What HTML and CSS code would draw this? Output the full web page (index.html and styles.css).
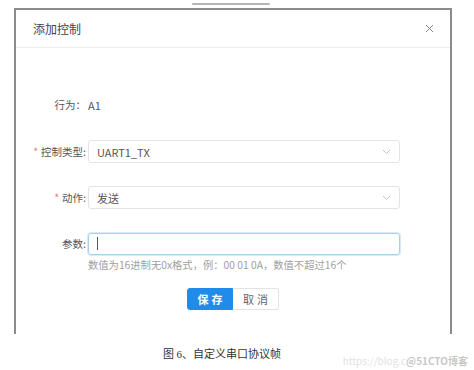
FILE: index.html
```html
<!DOCTYPE html>
<html lang="zh-CN">
<head>
    <meta charset="UTF-8">
    <title>添加控制</title>
    <link rel="stylesheet" href="styles.css">
</head>
<body>
    <div class="top-strip"><div class="strip-mark"></div></div>

    <div class="dialog">
        <div class="dialog-header">
            <span class="dialog-title">添加控制</span>
            <svg class="close-icon" width="9" height="9" viewBox="0 0 9 9">
                <path d="M1 1 L8 8 M8 1 L1 8" stroke="#8a8a8a" stroke-width="1" fill="none"/>
            </svg>
        </div>

        <div class="dialog-body">
            <div class="form-row row-plain">
                <label class="form-label">行为：</label>
                <span class="plain-value">A1</span>
            </div>

            <div class="form-row">
                <label class="form-label"><i class="star">*</i>控制类型:</label>
                <div class="select-box">
                    <span>UART1_TX</span>
                    <svg class="arrow" width="9" height="6" viewBox="0 0 9 6">
                        <path d="M1 1 L4.5 4.5 L8 1" stroke="#c0c4cc" stroke-width="1" fill="none"/>
                    </svg>
                </div>
            </div>

            <div class="form-row">
                <label class="form-label"><i class="star">*</i>动作:</label>
                <div class="select-box">
                    <span>发送</span>
                    <svg class="arrow" width="9" height="6" viewBox="0 0 9 6">
                        <path d="M1 1 L4.5 4.5 L8 1" stroke="#c0c4cc" stroke-width="1" fill="none"/>
                    </svg>
                </div>
            </div>

            <div class="form-row">
                <label class="form-label">参数:</label>
                <div class="text-input focused"><span class="caret"></span></div>
            </div>
            <p class="hint">数值为16进制无0x格式，例：00 01 0A，数值不超过16个</p>

            <div class="actions">
                <button class="btn btn-primary">保存</button>
                <button class="btn btn-default">取消</button>
            </div>
        </div>
    </div>

    <div class="caption">图 6、自定义串口协议帧</div>
    <div class="watermark"><span class="wm-url">https://blog.c</span><span class="wm-site">@51CTO博客</span></div>
</body>
</html>
```

FILE: styles.css
```css
body {
    margin: 0;
    width: 474px;
    height: 370px;
    overflow: hidden;
    background: #fff;
    font-family: "Noto Sans CJK SC", "Noto Sans", sans-serif;
    color: #606266;
}

.top-strip {
    height: 5px;
    padding-left: 192px;
}

.strip-mark {
    width: 78px;
    height: 2px;
    margin-top: 3px;
    background: #b4b4b4;
    border-radius: 1px;
}

.dialog {
    margin-left: 14px;
    width: 434px;
    height: 324px;
    border: 2px solid #8c8c8c;
    border-bottom: none;
    background: #fff;
}

.dialog-header {
    height: 37px;
    display: flex;
    align-items: center;
    justify-content: space-between;
    padding: 0 16px 0 17px;
    border-bottom: 1px solid #ececec;
}

.dialog-title {
    font-size: 12px;
    color: #444;
}

.dialog-body {
    padding-top: 45px;
}

.form-row {
    display: flex;
    align-items: center;
    height: 23px;
    margin-bottom: 23px;
}

.row-plain {
    margin-bottom: 24px;
}

.form-label {
    width: 70px;
    padding-right: 2px;
    text-align: right;
    font-size: 10.5px;
    color: #555;
}

.star {
    font-style: normal;
    color: #f07b7b;
    margin-right: 3px;
}

.plain-value {
    font-size: 11px;
    color: #555;
}

.select-box {
    width: 294px;
    height: 21px;
    border: 1px solid #e2e4e8;
    border-radius: 3px;
    display: flex;
    align-items: center;
    justify-content: space-between;
    padding: 0 8px 0 8px;
    font-size: 11px;
    color: #555;
}

.text-input {
    width: 302px;
    height: 20px;
    border: 1px solid #a9d2ee;
    border-radius: 3px;
    box-shadow: 0 0 0 1px #d8ebf8;
    display: flex;
    align-items: center;
    padding-left: 8px;
}

.caret {
    width: 1px;
    height: 13px;
    background: #555;
}

.hint {
    margin: -20px 0 0 72px;
    font-size: 10.3px;
    line-height: 14px;
    color: #a0a0a0;
}

.actions {
    display: flex;
    justify-content: center;
    margin-top: 16px;
}

.btn {
    width: 46px;
    height: 22px;
    font-family: inherit;
    font-size: 11px;
    letter-spacing: 3px;
    padding: 0 0 0 3px;
    cursor: pointer;
}

.btn-primary {
    background: #1f8ceb;
    color: #fff;
    font-weight: bold;
    border: 1px solid #1f8ceb;
    border-radius: 3px 0 0 3px;
}

.btn-default {
    background: #fff;
    color: #666;
    border: 1px solid #e4e4e4;
    border-left: none;
    border-radius: 0 3px 3px 0;
}

.caption {
    text-align: center;
    margin-top: 12px;
    padding-right: 30px;
    font-family: "Liberation Serif", "Noto Sans CJK SC", serif;
    font-size: 11px;
    line-height: 16px;
    color: #333;
}

.watermark {
    text-align: right;
    padding-right: 6px;
    margin-top: -8px;
    font-size: 10px;
    line-height: 14px;
}

.wm-url {
    color: #e2e2e2;
}

.wm-site {
    color: #c8c8c8;
    font-weight: bold;
}
```
